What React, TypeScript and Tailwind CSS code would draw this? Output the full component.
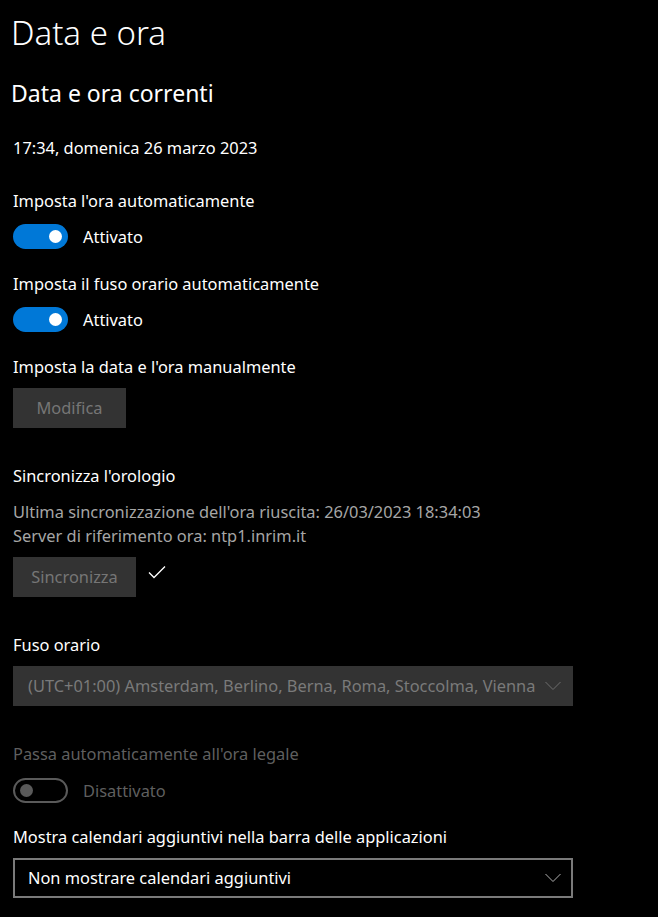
import React from "react";

function Toggle({ on, label, disabled }: { on: boolean; label: string; disabled?: boolean }) {
  return (
    <div className="flex items-center gap-[15px] h-[25px]">
      {on ? (
        <div className="w-[55px] h-[25px] rounded-full bg-[#0078d7] flex items-center justify-end pr-[6px]">
          <div className="w-[13px] h-[13px] rounded-full bg-white" />
        </div>
      ) : (
        <div className="w-[55px] h-[25px] rounded-full border-2 border-[#5a5a5a] flex items-center pl-[5px]">
          <div className="w-[13px] h-[13px] rounded-full bg-[#5a5a5a]" />
        </div>
      )}
      <span className={disabled ? "text-[#5f5f5f]" : "text-white"}>{label}</span>
    </div>
  );
}

function Chevron({ color }: { color: string }) {
  return (
    <svg width="16" height="10" viewBox="0 0 16 10" fill="none">
      <path d="M0.5 1 L8 8.5 L15.5 1" stroke={color} strokeWidth="1" />
    </svg>
  );
}

export default function App() {
  return (
    <div
      className="w-[658px] h-[917px] bg-black text-white overflow-hidden text-[16.4px] leading-[24px] whitespace-nowrap"
      style={{ fontFamily: "'Noto Sans', sans-serif" }}
    >
      <div className="px-[13px]">
        {/* Page title */}
        <h1 className="-ml-[2px] pt-[11px] text-[33px] leading-[44px] font-light">Data e ora</h1>
        <h2 className="-ml-[2px] mt-[23px] text-[23px] leading-[30px]">Data e ora correnti</h2>

        <div className="mt-[28px]">17:34, domenica 26 marzo 2023</div>

        <div className="mt-[29px]">Imposta l'ora automaticamente</div>
        <div className="mt-[11px]">
          <Toggle on label="Attivato" />
        </div>

        <div className="mt-[23px]">Imposta il fuso orario automaticamente</div>
        <div className="mt-[11px]">
          <Toggle on label="Attivato" />
        </div>

        <div className="mt-[23px]">Imposta la data e l'ora manualmente</div>
        <button className="mt-[9px] w-[113px] h-[40px] bg-[#333333] text-[#767676]">Modifica</button>

        <div className="mt-[36px]">Sincronizza l'orologio</div>
        <div className="mt-[12px] text-[#a6a6a6]">Ultima sincronizzazione dell'ora riuscita: 26/03/2023 18:34:03</div>
        <div className="text-[#a6a6a6]">Server di riferimento ora: ntp1.inrim.it</div>
        <div className="mt-[9px] flex items-start gap-[12px]">
          <button className="w-[123px] h-[40px] bg-[#333333] text-[#767676]">Sincronizza</button>
          <svg className="mt-[8px]" width="18" height="14" viewBox="0 0 18 14" fill="none">
            <path d="M1 7.5 L6 12.5 L17 1.5" stroke="#ffffff" strokeWidth="1.3" />
          </svg>
        </div>

        <div className="mt-[36px]">Fuso orario</div>
        <div className="mt-[9px] w-[560px] h-[40px] bg-[#333333] flex items-center justify-between pl-[15px] pr-[12px] text-[#7a7a7a]">
          <span>(UTC+01:00) Amsterdam, Berlino, Berna, Roma, Stoccolma, Vienna</span>
          <Chevron color="#6e6e6e" />
        </div>

        <div className="mt-[36px] text-[#5f5f5f]">Passa automaticamente all'ora legale</div>
        <div className="mt-[12px]">
          <Toggle on={false} label="Disattivato" disabled />
        </div>

        <div className="mt-[22px]">Mostra calendari aggiuntivi nella barra delle applicazioni</div>
        <div className="mt-[9px] w-[560px] h-[40px] border-2 border-[#7a7a7a] flex items-center justify-between pl-[13px] pr-[10px]">
          <span>Non mostrare calendari aggiuntivi</span>
          <Chevron color="#b0b0b0" />
        </div>
      </div>
    </div>
  );
}
